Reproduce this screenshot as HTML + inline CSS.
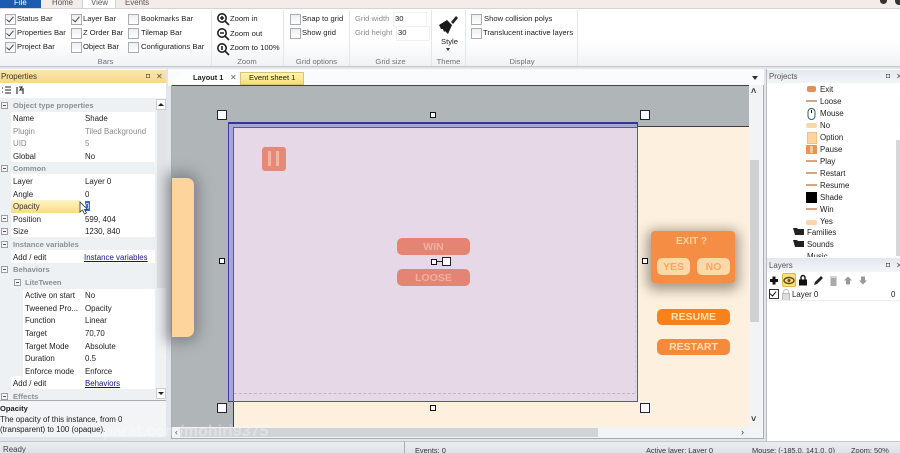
<!DOCTYPE html>
<html><head><meta charset="utf-8"><style>
html,body{margin:0;padding:0;width:900px;height:453px;overflow:hidden;background:#e2e6eb}
#r{position:relative;width:900px;height:453px;overflow:hidden;font:7.9px "Liberation Sans",sans-serif;color:#1d1d1d;filter:blur(.35px)}
#r div,#r span,#r a,#r svg{position:absolute}
span,a{white-space:nowrap;line-height:11px}
.g{color:#8b8b8b}.b{color:#6d7278;text-align:center}
.c{width:9px;height:9px;border:1px solid #a9adb2;background:linear-gradient(#eee,#fff);box-sizing:content-box}
.c.k::after{content:"";position:absolute;left:2px;top:0;width:3px;height:6px;border:solid #444;border-width:0 1.2px 1.2px 0;transform:rotate(40deg)}
.sep{width:1px;top:10px;height:56px;background:#e3e6ea}
.h{width:8px;height:8px;border:1px solid #23233f;background:#fff;box-sizing:content-box}
.s{width:4px;height:4px;border:1px solid #111;background:#fff;box-sizing:content-box}
.row{left:11px;width:144px;height:12.67px;background:#fff}
.sec{left:0;width:155px;height:12.67px;background:#eef1f4}
.bt{border-radius:5px;text-align:center;font-weight:bold;color:#fde3c2}
a{color:#14148c;text-decoration:underline;font-size:7.9px}
.exp{width:5px;height:5px;border:1px solid #9a9ea3;background:#f7f7f7}
.exp::after{content:"";position:absolute;left:1px;top:2px;width:3px;height:1px;background:#555}
.ln{height:2px;width:11px;left:806px;background:#d8a583}
.ot{left:820px}
.sh{font-weight:bold;color:#8b8f94;font-size:7.6px}
</style></head><body><div id="r">
<div style="left:0;top:0;width:900px;height:8px;background:#f4ece9"></div>
<div style="left:0;top:0;width:41px;height:8px;background:#1d5bb0"></div>
<span style="left:14px;top:-3px;color:#fff">File</span>
<span style="left:52px;top:-3px;color:#555">Home</span>
<div style="left:82px;top:0;width:32px;height:9px;background:#fff;border:solid #cfd2d6;border-width:0 1px"></div>
<span style="left:91px;top:-3px;color:#555">View</span>
<span style="left:125px;top:-3px;color:#555">Events</span>
<div style="left:880px;top:0;width:7px;height:4px;background:#333;border-radius:0 0 4px 4px"></div>
<div style="left:895px;top:0;width:5px;height:5px;background:#333;border-radius:0 0 0 4px"></div>
<div style="left:0;top:8px;width:900px;height:59px;background:linear-gradient(#fff 55%,#f0f2f4);border-top:1px solid #d4d4d6;border-bottom:1px solid #c3c6ca;box-sizing:border-box"></div>

<div style="left:0;top:0;font-size:7.6px;letter-spacing:.02px">
<div class="c k" style="left:5px;top:14px"></div><span style="left:17px;top:13px">Status Bar</span>
<div class="c k" style="left:5px;top:28px"></div><span style="left:17px;top:27px">Properties Bar</span>
<div class="c k" style="left:5px;top:42px"></div><span style="left:17px;top:41px">Project Bar</span>
<div class="c k" style="left:71px;top:14px"></div><span style="left:83px;top:13px">Layer Bar</span>
<div class="c" style="left:71px;top:28px"></div><span style="left:83px;top:27px">Z Order Bar</span>
<div class="c" style="left:71px;top:42px"></div><span style="left:83px;top:41px">Object Bar</span>
<div class="c" style="left:128px;top:14px"></div><span style="left:141px;top:13px">Bookmarks Bar</span>
<div class="c" style="left:128px;top:28px"></div><span style="left:141px;top:27px">Tilemap Bar</span>
<div class="c" style="left:128px;top:42px"></div><span style="left:141px;top:41px">Configurations Bar</span>
<span class="b" style="left:0;width:211px;top:56px">Bars</span>
<div class="sep" style="left:211px"></div>

<svg style="left:216px;top:12px" width="14" height="44" viewBox="0 0 14 44" fill="none" stroke="#222" stroke-width="1.6"><circle cx="6" cy="6" r="4.2"/><path d="M9 9l4 4M4 6h4M6 4v4"/><circle cx="6" cy="21" r="4.2"/><path d="M9 24l4 4M4 21h4"/><circle cx="6" cy="36" r="4.2"/><path d="M9 39l4 4M6 34v4"/></svg>
<span style="left:230px;top:13px">Zoom in</span>
<span style="left:230px;top:28px">Zoom out</span>
<span style="left:230px;top:42px">Zoom to 100%</span>
<span class="b" style="left:212px;width:70px;top:56px">Zoom</span>
<div class="sep" style="left:283px"></div>

<div class="c" style="left:290px;top:14px"></div><span style="left:302px;top:13px">Snap to grid</span>
<div class="c" style="left:290px;top:28px"></div><span style="left:302px;top:27px">Show grid</span>
<span class="b" style="left:284px;width:65px;top:56px">Grid options</span>
<div class="sep" style="left:349px"></div>

<span class="g" style="left:355px;top:13px">Grid width</span><span style="left:395px;top:13px">30</span>
<div style="left:393px;top:12px;width:32px;height:13px;border:1px solid #f0f0f0"></div>
<span class="g" style="left:355px;top:27px">Grid height</span><span style="left:398px;top:27px">30</span>
<div style="left:396px;top:26px;width:32px;height:13px;border:1px solid #f0f0f0"></div>
<span class="b" style="left:350px;width:81px;top:56px">Grid size</span>
<div class="sep" style="left:431px"></div>

<svg style="left:438px;top:14px" width="22" height="21" viewBox="0 0 22 21"><path d="M13 8l5-6 2 2-5 6z" fill="#222"/><path d="M1 11l8-5 5 5-4 9-3-3-1 1-1-3-2 0z" fill="#1a1a1a"/></svg>
<span style="left:441px;top:36px">Style</span>
<div style="left:446px;top:48px;border:2px solid transparent;border-top:3px solid #333;width:0;height:0"></div>
<span class="b" style="left:432px;width:33px;top:56px">Theme</span>
<div class="sep" style="left:465px"></div>

<div class="c" style="left:471px;top:14px"></div><span style="left:484px;top:13px">Show collision polys</span>
<div class="c" style="left:471px;top:28px"></div><span style="left:483px;top:27px">Translucent inactive layers</span>
<span class="b" style="left:466px;width:112px;top:56px">Display</span>
<div class="sep" style="left:577px"></div>
</div>

<!-- properties -->
<div style="left:0;top:69px;width:166px;height:368px;background:#fff"></div>
<div style="left:0;top:70px;width:166px;height:13px;background:linear-gradient(#fbe6ae,#f7d988)"></div>
<span style="left:1px;top:71px;color:#333">Properties</span>
<span style="left:146px;top:71px;color:#555;font-size:7px">◘</span><span style="left:156px;top:71px;color:#555">✕</span>
<svg style="left:2px;top:86px" width="24" height="10" viewBox="0 0 24 10" stroke="#222" fill="none"><path d="M3 1h6M3 4h6M3 7h6M0 2h1M0 6h1"/><path d="M15 1v7M17 1h3l-2 3h3M21 2v6" stroke-width="1.1"/></svg>
<div style="left:0;top:98px;width:155px;height:302px;background:#eef1f4"></div>

<div class="sec" style="top:98.5px"></div><div class="exp" style="left:1px;top:102px"></div><span class="sh" style="left:13px;top:100px">Object type properties</span>
<div class="row" style="top:111.5px;height:50px"></div>
<span style="left:13px;top:113px">Name</span><span style="left:85px;top:113px">Shade</span>
<span class="g" style="left:13px;top:125.5px">Plugin</span><span class="g" style="left:85px;top:125.5px">Tiled Background</span>
<span class="g" style="left:13px;top:138px">UID</span><span class="g" style="left:85px;top:138px">5</span>
<span style="left:13px;top:151px">Global</span><span style="left:85px;top:151px">No</span>
<div class="exp" style="left:1px;top:165px"></div><span class="sh" style="left:13px;top:163px">Common</span>
<div class="row" style="top:174px;height:62.5px"></div>
<span style="left:13px;top:176px">Layer</span><span style="left:85px;top:176px">Layer 0</span>
<span style="left:13px;top:189px">Angle</span><span style="left:85px;top:189px">0</span>
<div style="left:11px;top:200px;width:69px;height:13px;background:linear-gradient(#fdf3c8,#f8dd7e)"></div>
<span style="left:13px;top:201px;color:#333">Opacity</span>
<div style="left:85px;top:201px;width:5px;height:10px;background:#2f6fd0"></div><span style="left:85px;top:201px;color:#fff">0</span>
<svg style="left:79px;top:201px" width="10" height="14" viewBox="0 0 10 14"><path d="M1 1v10l2.500-2 2 4 2-1-2-3.500h3z" fill="#fff" stroke="#333" stroke-width=".8"/></svg>
<div class="exp" style="left:1px;top:215px"></div><span style="left:13px;top:214px">Position</span><span style="left:85px;top:214px">599, 404</span>
<div class="exp" style="left:1px;top:228px"></div><span style="left:13px;top:226px">Size</span><span style="left:85px;top:226px">1230, 840</span>
<div class="exp" style="left:1px;top:241px"></div><span class="sh" style="left:13px;top:239px">Instance variables</span>
<div class="row" style="top:250px;height:13px"></div>
<span style="left:13px;top:252px">Add / edit</span><a style="left:84px;top:252px">Instance variables</a>
<div class="exp" style="left:1px;top:266px"></div><span class="sh" style="left:13px;top:264px">Behaviors</span>
<div class="exp" style="left:14px;top:279px"></div><span class="sh" style="left:25px;top:277px">LiteTween</span>
<div class="row" style="left:23px;width:132px;top:288.500px;height:88px"></div>
<div class="row" style="top:376px;height:13px"></div>
<span style="left:25px;top:290px">Active on start</span><span style="left:85px;top:290px">No</span>
<span style="left:25px;top:303px">Tweened Pro...</span><span style="left:85px;top:303px">Opacity</span>
<span style="left:25px;top:315px">Function</span><span style="left:85px;top:315px">Linear</span>
<span style="left:25px;top:328px">Target</span><span style="left:85px;top:328px">70,70</span>
<span style="left:25px;top:341px">Target Mode</span><span style="left:85px;top:341px">Absolute</span>
<span style="left:25px;top:353px">Duration</span><span style="left:85px;top:353px">0.5</span>
<span style="left:25px;top:366px">Enforce mode</span><span style="left:85px;top:366px">Enforce</span>
<span style="left:13px;top:378px">Add / edit</span><a style="left:85px;top:378px">Behaviors</a>
<div class="exp" style="left:1px;top:393px"></div><span class="sh" style="left:13px;top:391px">Effects</span>
<div style="left:155px;top:98px;width:11px;height:302px;background:#f1f2f4"></div>
<div style="left:157px;top:100px;width:9px;height:188px;background:#e2e3e6"></div>
<div style="left:156px;top:99px;width:10px;height:11px;background:#fff;border:1px solid #ccc;box-sizing:border-box"></div>
<div style="left:158px;top:103px;border:3px solid transparent;border-bottom:3px solid #222;border-top:0"></div>
<div style="left:156px;top:388px;width:10px;height:11px;background:#fff;border:1px solid #ccc;box-sizing:border-box"></div>
<div style="left:158px;top:392px;border:3px solid transparent;border-top:3px solid #222;border-bottom:0"></div>
<div style="left:0;top:400px;width:166px;height:37px;background:#f3f4f6;border-top:1px solid #a9adb2;box-sizing:border-box"></div>
<span style="left:0;top:403px;font-weight:bold;font-size:7.6px">Opacity</span>
<span style="left:0;top:414px">The opacity of this instance, from 0</span>
<span style="left:0;top:424px">(transparent) to 100 (opaque).</span>

<!-- tabs -->
<div style="left:168px;top:69px;width:596px;height:17px;background:#fafbfc"></div>
<div style="left:170px;top:72px;width:68px;height:12px;background:#fdfdfd;clip-path:polygon(12px 0,100% 0,100% 100%,0 100%)"></div>
<span style="left:193px;top:72px;font-weight:bold;color:#222;font-size:7.400px">Layout 1</span>
<span style="left:230px;top:72px;color:#666">✕</span>
<div style="left:240px;top:72px;width:62px;height:11px;background:linear-gradient(#fff3b0,#fadf6e);border:1px solid #d9c57a;box-sizing:content-box"></div>
<span style="left:249px;top:72px;color:#222;font-size:7.600px">Event sheet 1</span>
<div style="left:752px;top:76px;border:3.500px solid transparent;border-top:4px solid #333;border-bottom:0"></div>

<!-- canvas -->
<div style="left:171px;top:85px;width:593px;height:354px;background:#f3f4f5;border:solid #a9adb2;border-width:1px 1px 1px 1px;box-sizing:border-box"></div>
<div style="left:172px;top:85px;width:577px;height:342px;background:#b0b5b7;border-top:1px solid #444;box-sizing:border-box"></div>
<div style="left:234px;top:127px;width:515px;height:300px;background:#fdf0df"></div>
<div style="left:233px;top:126px;width:516px;height:1px;background:#3c3c44"></div>
<div style="left:233px;top:126px;width:1px;height:301px;background:#3c3c44"></div>
<div style="left:172px;top:178px;width:22px;height:159px;background:#fdd49b;border-radius:0 7px 7px 0;box-shadow:0 0 14px 5px #80858a"></div>
<div style="left:228px;top:122px;width:410px;height:280px;background:#a8a6d2;border:1px solid #3a3aa0;box-sizing:border-box;border-top:2px solid #34349a"></div>
<div style="left:234px;top:128px;width:403px;height:273px;background:#e6d8e7;outline:1px solid #5a5a86"></div>
<div style="left:234px;top:393px;width:401px;border-top:1px dashed #c4b5c6"></div>
<div style="left:635px;top:160px;height:233px;border-left:1px dashed #d6c8d8"></div>
<div style="left:262px;top:147px;width:24px;height:24px;background:#e58a78;border-radius:3px"></div>
<div style="left:268px;top:151px;width:3px;height:15px;background:#f0b6a6"></div>
<div style="left:276px;top:151px;width:3px;height:15px;background:#f0b6a6"></div>
<div class="bt" style="left:397px;top:238px;width:73px;height:17px;background:#e58474;color:#eeb0a2;font-size:10.500px;line-height:18px">WIN</div>
<div class="bt" style="left:397px;top:269px;width:73px;height:17px;background:#e58474;color:#eeb0a2;font-size:10.500px;line-height:18px">LOOSE</div>
<div class="s" style="left:431px;top:259px"></div><div style="left:437px;top:261px;width:5px;height:1px;background:#222"></div><div style="left:442px;top:257px;width:7px;height:7px;border:1px solid #222;background:#fff"></div>
<div style="left:651px;top:231px;width:84px;height:52px;background:#f68d45;border-radius:4px;box-shadow:0 3px 12px 4px #a59a88"></div>
<span style="left:676px;top:236px;font-weight:bold;font-size:10px;color:#fcd39f">EXIT ?</span>
<div class="bt" style="left:657px;top:258px;width:33px;height:17px;background:#fdd9aa;color:#f4a65c;font-size:10.500px;line-height:18px">YES</div>
<div class="bt" style="left:697px;top:258px;width:33px;height:17px;background:#fdd9aa;color:#f4a65c;font-size:10.500px;line-height:18px">NO</div>
<div class="bt" style="left:657px;top:309px;width:73px;height:16px;background:#f7821c;color:#fde0b2;font-size:10.500px;line-height:17px">RESUME</div>
<div class="bt" style="left:657px;top:339px;width:73px;height:16px;background:#f58a3c;color:#fde0b2;font-size:10.500px;line-height:17px">RESTART</div>
<div class="h" style="left:217px;top:110px"></div><div class="s" style="left:430px;top:112px"></div><div class="h" style="left:640px;top:110px"></div>
<div class="s" style="left:219px;top:258px"></div><div class="s" style="left:642px;top:258px"></div>
<div class="h" style="left:217px;top:403px"></div><div class="s" style="left:430px;top:405px"></div><div class="h" style="left:640px;top:403px"></div>
<div style="left:749px;top:85px;width:14px;height:342px;background:#f2f3f4"></div>
<div style="left:750px;top:160px;width:9px;height:162px;background:#cfd1d3"></div>
<span style="left:751px;top:86px;font-size:9px;font-weight:bold;color:#333">˄</span>
<span style="left:751px;top:414px;font-size:9px;font-weight:bold;color:#333">˅</span>
<div style="left:172px;top:427px;width:577px;height:11px;background:#f2f3f4"></div>
<div style="left:180px;top:428px;width:418px;height:9px;background:#d2d3d5"></div>
<span style="left:175px;top:427px;font-size:9px;color:#333">‹</span><span style="left:741px;top:427px;font-size:9px;color:#333">›</span>
<span style="left:103px;top:424px;font-size:16px;font-weight:bold;color:#fff;opacity:.3;line-height:16px">parat.com/mohiri9375</span>

<!-- projects -->
<div style="left:766px;top:69px;width:134px;height:372px;background:#fff;border-left:1px solid #b9bcc0;box-sizing:border-box"></div>
<div style="left:767px;top:70px;width:133px;height:13px;background:linear-gradient(#e3e8ee,#f3f5f8)"></div>
<span style="left:769px;top:71px;color:#555">Projects</span>
<span style="left:886px;top:71px;color:#555;font-size:7px">◘</span><span style="left:896px;top:71px;color:#555">✕</span>
<div style="left:896px;top:140px;width:4px;height:116px;background:#d6d7d9"></div>
<div style="left:807px;top:86px;width:9px;height:6px;background:#e58e58;border-radius:2px"></div><span class="ot" style="top:84px">Exit</span>
<div class="ln" style="top:100px"></div><span class="ot" style="top:96px">Loose</span>
<svg style="left:807px;top:108px" width="10" height="12" viewBox="0 0 10 12" fill="#fff" stroke="#34605c"><rect x="1" y=".5" width="7" height="11" rx="3.500"/><path d="M4.500 2v3" stroke="#111"/></svg><span class="ot" style="top:108px">Mouse</span>
<div style="left:806px;top:123px;width:11px;height:5px;background:#fcd5a8;border-radius:2px"></div><span class="ot" style="top:120px">No</span>
<div style="left:807px;top:132px;width:8px;height:10px;background:#fdd49b;border:1px solid #eac28a"></div><span class="ot" style="top:132px">Option</span>
<div style="left:806px;top:145px;width:11px;height:9px;background:#ec9252;border-radius:1px"></div><div style="left:810px;top:146px;width:3px;height:7px;background:#f8c79b;border-right:0"></div><span class="ot" style="top:144px">Pause</span>
<div class="ln" style="top:160px"></div><span class="ot" style="top:156px">Play</span>
<div class="ln" style="top:172px"></div><span class="ot" style="top:168px">Restart</span>
<div class="ln" style="top:184px"></div><span class="ot" style="top:180px">Resume</span>
<div style="left:806px;top:192px;width:11px;height:11px;background:#000"></div><span class="ot" style="top:192px">Shade</span>
<div class="ln" style="top:208px"></div><span class="ot" style="top:204px">Win</span>
<div style="left:806px;top:220px;width:11px;height:5px;background:#fcd5a8;border-radius:2px"></div><span class="ot" style="top:216px">Yes</span>
<svg style="left:793px;top:228px" width="12" height="24" viewBox="0 0 12 24" fill="#222"><path d="M0 0h4l1 1h6v6H2z"/><path d="M0 12h4l1 1h6v6H2z"/></svg>
<span style="left:807px;top:227px">Families</span><span style="left:807px;top:239px">Sounds</span>
<span style="left:807px;top:251px">Music</span>
<div style="left:767px;top:257px;width:133px;height:184px;background:#fff"></div>
<div style="left:767px;top:258px;width:133px;height:14px;background:linear-gradient(#e3e8ee,#f3f5f8)"></div>
<span style="left:769px;top:260px;color:#555">Layers</span>
<span style="left:886px;top:260px;color:#555;font-size:7px">◘</span><span style="left:896px;top:260px;color:#555">✕</span>
<div style="left:782px;top:273px;width:14px;height:14px;background:#fbdf84;border:1px solid #dcb94e;box-sizing:border-box;border-radius:2px"></div>
<svg style="left:769px;top:274px" width="100" height="13" viewBox="0 0 100 13"><path d="M1 6.500h8M5 2.500v8" stroke="#111" stroke-width="3"/><ellipse cx="20" cy="6.500" rx="5" ry="3" fill="none" stroke="#6b4a10" stroke-width="1.400"/><circle cx="20" cy="6.500" r="1.500" fill="#6b4a10"/><rect x="30" y="5.500" width="8" height="6" fill="#111"/><path d="M32 5.500V3.500a2 2 0 0 1 4 0v2" fill="none" stroke="#111" stroke-width="1.400"/><path d="M45 11l1-3 6-6 2 2-6 6z" fill="#222"/><path d="M61 3h7M62 4.500h5v7h-5z" fill="#aaa" stroke="#aaa"/><path d="M75 6.500l4-4 4 4h-2v4h-4v-4z" fill="#999"/><path d="M90 6.500l4 4 4-4h-2v-4h-4v4z" fill="#999"/></svg>
<div style="left:769px;top:289px;width:8px;height:8px;border:1px solid #333;background:#fff"></div>
<div style="left:771px;top:290px;width:3px;height:5px;border:solid #111;border-width:0 1.200px 1.200px 0;transform:rotate(40deg)"></div>
<div style="left:782px;top:293px;width:6px;height:6px;background:#ddd;border:1px solid #bbb"></div>
<div style="left:783px;top:289px;width:4px;height:4px;border:1px solid #bbb;border-bottom:0;border-radius:3px 3px 0 0"></div>
<span style="left:792px;top:289px">Layer 0</span><span style="left:891px;top:289px">0</span>
<div style="left:767px;top:300px;width:133px;height:1px;background:#eceef0"></div>

<!-- status -->
<div style="left:0;top:441px;width:900px;height:12px;background:linear-gradient(#eaedf0,#dfe3e7);border-top:1px solid #c3c6ca;box-sizing:border-box"></div>
<div style="left:404px;top:441px;width:1px;height:12px;background:#a9adb2"></div>
<span style="left:3px;top:444px;color:#444">Ready</span>
<span style="left:415px;top:445px;color:#333;font-size:7.400px">Events: 0</span>
<span style="left:646px;top:445px;color:#333;font-size:7.400px">Active layer: Layer 0</span>
<span style="left:752px;top:445px;color:#333;font-size:7.400px">Mouse: (-185.0, 141.0, 0)</span>
<span style="left:851px;top:445px;color:#333;font-size:7.400px">Zoom: 50%</span>
</div></body></html>
